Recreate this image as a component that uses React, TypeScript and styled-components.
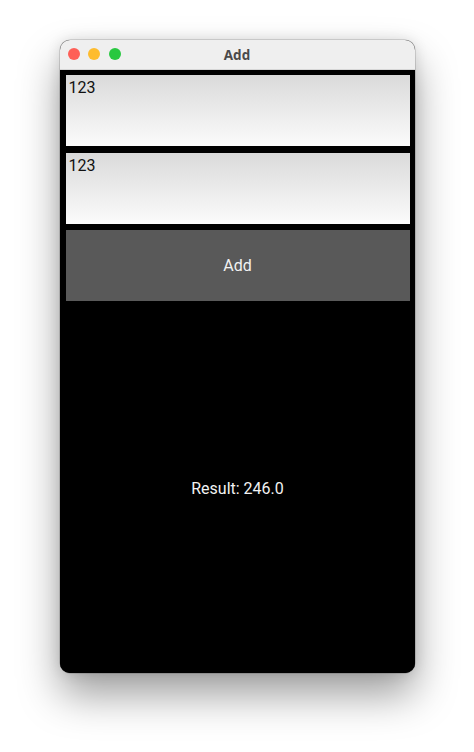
import React, { useState } from 'react';
import styled, { createGlobalStyle } from 'styled-components';

const GlobalStyle = createGlobalStyle`
  html, body {
    margin: 0;
    padding: 0;
    background: #ffffff;
    font-family: Roboto, 'Liberation Sans', sans-serif;
  }
`;

const Page = styled.div`
  display: flex;
  justify-content: center;
  padding-top: 40px;
  height: 752px;
  box-sizing: border-box;
`;

const Window = styled.div`
  width: 355px;
  height: 633px;
  display: flex;
  flex-direction: column;
  border-radius: 10px;
  overflow: hidden;
  background: #000;
  box-shadow: 0 22px 42px rgba(0, 0, 0, 0.38), 0 0 14px rgba(0, 0, 0, 0.12),
    0 0 0 0.5px rgba(0, 0, 0, 0.25);
`;

const TitleBar = styled.div`
  position: relative;
  height: 30px;
  flex: none;
  display: flex;
  align-items: center;
  justify-content: center;
  background: #efefef;
  border-bottom: 1px solid #d6d6d6;
  box-sizing: border-box;
`;

const Lights = styled.div`
  position: absolute;
  left: 8px;
  top: 8px;
  display: flex;
  gap: 8.5px;
`;

const Light = styled.span<{ $color: string }>`
  width: 12px;
  height: 12px;
  border-radius: 50%;
  background: ${(p) => p.$color};
`;

const Title = styled.div`
  font-family: 'Open Sans', 'Liberation Sans', sans-serif;
  font-size: 13.5px;
  font-weight: 700;
  color: #4a4a4a;
  margin-top: 1px;
`;

const Content = styled.div`
  flex: 1;
  display: flex;
  flex-direction: column;
  gap: 6.5px;
  padding: 5px 5px 0 6px;
  background: #000;
`;

const Field = styled.textarea`
  height: 71px;
  flex: none;
  box-sizing: border-box;
  border: none;
  outline: none;
  resize: none;
  overflow: hidden;
  margin: 0;
  padding: 3px 3px;
  font-family: Roboto, 'Liberation Sans', sans-serif;
  font-size: 16px;
  line-height: 19px;
  color: #111;
  background: linear-gradient(to bottom, #dadada 0%, #e9e9e9 45%, #fbfbfb 100%);
`;

const Button = styled.button`
  height: 71px;
  flex: none;
  border: none;
  margin: 0;
  background: #595959;
  color: #f2f2f2;
  font-family: Roboto, 'Liberation Sans', sans-serif;
  font-size: 16px;
  cursor: pointer;
`;

const Result = styled.div`
  flex: 1;
  display: flex;
  align-items: center;
  justify-content: center;
  color: #f2f2f2;
  font-size: 16px;
  padding-bottom: 3px;
`;

export default function App() {
  const [a, setA] = useState('123');
  const [b, setB] = useState('123');
  const [result, setResult] = useState(246);

  const handleAdd = () => {
    setResult((parseFloat(a) || 0) + (parseFloat(b) || 0));
  };

  return (
    <>
      <GlobalStyle />
      <Page>
        <Window>
          <TitleBar>
            <Lights>
              <Light $color="#fe5f57" />
              <Light $color="#febc2e" />
              <Light $color="#28c840" />
            </Lights>
            <Title>Add</Title>
          </TitleBar>
          <Content>
            <Field value={a} onChange={(e) => setA(e.target.value)} />
            <Field value={b} onChange={(e) => setB(e.target.value)} />
            <Button onClick={handleAdd}>Add</Button>
            <Result>Result: {result.toFixed(1)}</Result>
          </Content>
        </Window>
      </Page>
    </>
  );
}
